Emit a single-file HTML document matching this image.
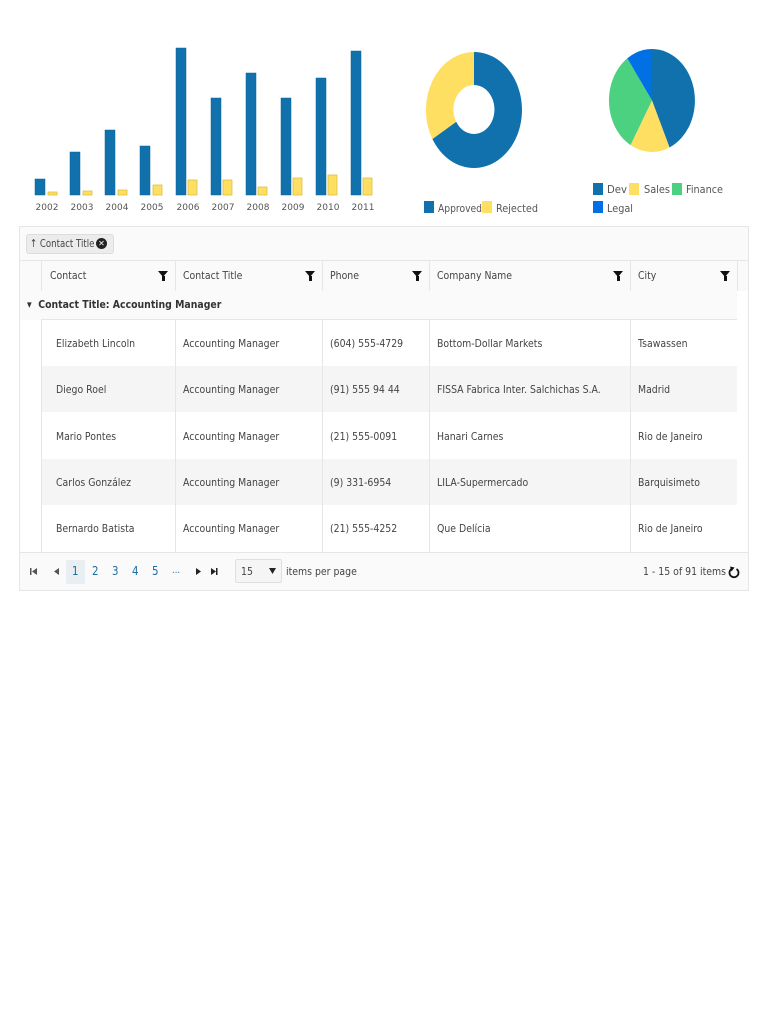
<!DOCTYPE html>
<html><head><meta charset="utf-8"><style>
*{box-sizing:border-box;margin:0;padding:0}
body{width:768px;height:1024px;background:#fff;font-family:"DejaVu Sans","Liberation Sans",sans-serif;color:#444;position:relative;overflow:hidden}
.a{position:absolute}
.grid{left:19px;top:226px;width:730px;height:365px;border:1px solid #e6e6e6;background:#fafafa}
.cell{position:absolute;font-size:11px;color:#444;white-space:nowrap;transform:scaleX(0.85);transform-origin:0 0}
.vl{position:absolute;width:1px;background:#e6e6e6}
.hl{position:absolute;height:1px;background:#e6e6e6}
.fil{position:absolute;width:0;height:0;border-left:5px solid transparent;border-right:5px solid transparent;border-top:6px solid #111}
.fil:after{content:"";position:absolute;left:-1.5px;top:-1px;width:3px;height:5px;background:#111}
</style></head><body>
<svg class="a" style="left:0;top:0" width="768" height="225">
<g fill="#1071ad" stroke="#0d6298" stroke-width="0.5">
<rect x="35" y="179" width="10" height="16"/><rect x="70" y="152" width="10" height="43"/><rect x="105" y="130" width="10" height="65"/><rect x="140" y="146" width="10" height="49"/><rect x="176" y="48" width="10" height="147"/><rect x="211" y="98" width="10" height="97"/><rect x="246" y="73" width="10" height="122"/><rect x="281" y="98" width="10" height="97"/><rect x="316" y="78" width="10" height="117"/><rect x="351" y="51" width="10" height="144"/>
</g>
<g fill="#ffdf62" stroke="#d6b83a" stroke-width="0.7">
<rect x="48" y="192" width="9" height="3"/><rect x="83" y="191" width="9" height="4"/><rect x="118" y="190" width="9" height="5"/><rect x="153" y="185" width="9" height="10"/><rect x="188" y="180" width="9" height="15"/><rect x="223" y="180" width="9" height="15"/><rect x="258" y="187" width="9" height="8"/><rect x="293" y="178" width="9" height="17"/><rect x="328" y="175" width="9" height="20"/><rect x="363" y="178" width="9" height="17"/>
</g>
<g font-size="9" fill="#555" text-anchor="middle" font-family="DejaVu Sans,sans-serif">
<text x="47" y="210">2002</text><text x="82" y="210">2003</text><text x="117" y="210">2004</text><text x="152" y="210">2005</text><text x="188" y="210">2006</text><text x="223" y="210">2007</text><text x="258" y="210">2008</text><text x="293" y="210">2009</text><text x="328" y="210">2010</text><text x="363" y="210">2011</text>
</g>
<path d="M474,52 A48,58 0 1 1 432.4,139 L456.2,121.75 A20.5,24.5 0 1 0 474,85 Z" fill="#1071ad"/>
<path d="M432.4,139 A48,58 0 0 1 474,52 L474,85 A20.5,24.5 0 0 0 456.2,121.75 Z" fill="#ffdf62"/>
<path d="M652,100.5 L652,49 A43,51.5 0 0 1 669.5,147.5 Z" fill="#1071ad"/>
<path d="M652,100.5 L669.5,147.5 A43,51.5 0 0 1 630.5,145.1 Z" fill="#ffdf62"/>
<path d="M652,100.5 L630.5,145.1 A43,51.5 0 0 1 627.3,58.3 Z" fill="#4cd180"/>
<path d="M652,100.5 L627.3,58.3 A43,51.5 0 0 1 652,49 Z" fill="#0070e4"/>
<g font-size="11" fill="#555" font-family="DejaVu Sans,sans-serif">
<rect x="424" y="201" width="10" height="12" fill="#1071ad"/><text x="438" y="212" textLength="44" lengthAdjust="spacingAndGlyphs">Approved</text>
<rect x="482" y="201" width="10" height="12" fill="#ffdf62"/><text x="496" y="212" textLength="42" lengthAdjust="spacingAndGlyphs">Rejected</text>
<rect x="593" y="183" width="10" height="12" fill="#1071ad"/><text x="607" y="193" textLength="20" lengthAdjust="spacingAndGlyphs">Dev</text>
<rect x="629" y="183" width="10" height="12" fill="#ffdf62"/><text x="644" y="193" textLength="26" lengthAdjust="spacingAndGlyphs">Sales</text>
<rect x="672" y="183" width="10" height="12" fill="#4cd180"/><text x="686" y="193" textLength="37" lengthAdjust="spacingAndGlyphs">Finance</text>
<rect x="593" y="201" width="10" height="12" fill="#0070e4"/><text x="607" y="212" textLength="26" lengthAdjust="spacingAndGlyphs">Legal</text>
</g>
</svg>

<div class="a grid">
 <div class="a" style="left:6px;top:7px;width:88px;height:20px;background:#ececec;border:1px solid #ddd;border-radius:3px"></div>
 <div class="cell" style="left:10px;top:10px;transform:scaleX(0.78)">↑ Contact Title</div>
 <div class="a" style="left:76px;top:11px;width:11px;height:11px;border-radius:50%;background:#222;color:#fff;font-size:8px;line-height:11px;text-align:center">✕</div>
 <div class="hl" style="left:0;top:33px;width:728px"></div>
 <div class="a" style="left:0;top:64px;width:728px;height:261px;background:#fff"></div>
 <div class="a" style="left:0;top:64px;width:717px;height:29px;background:#fafafa"></div>
 <div class="a" style="left:21px;top:139px;width:696px;height:46px;background:#f5f5f5"></div>
 <div class="a" style="left:21px;top:232px;width:696px;height:46px;background:#f5f5f5"></div>
 <div class="vl" style="left:21px;top:34px;height:30px"></div>
 <div class="vl" style="left:155px;top:34px;height:30px"></div>
 <div class="vl" style="left:302px;top:34px;height:30px"></div>
 <div class="vl" style="left:409px;top:34px;height:30px"></div>
 <div class="vl" style="left:610px;top:34px;height:30px"></div>
 <div class="vl" style="left:717px;top:34px;height:30px"></div>
 <div class="vl" style="left:21px;top:93px;height:232px"></div>
 <div class="vl" style="left:155px;top:93px;height:232px"></div>
 <div class="vl" style="left:302px;top:93px;height:232px"></div>
 <div class="vl" style="left:409px;top:93px;height:232px"></div>
 <div class="vl" style="left:610px;top:93px;height:232px"></div>
 <div class="hl" style="left:21px;top:92px;width:696px"></div>
 <div class="hl" style="left:0;top:325px;width:728px"></div>
 <div class="cell" style="left:30px;top:42px">Contact</div><div class="fil" style="left:138px;top:44px"></div>
 <div class="cell" style="left:163px;top:42px">Contact Title</div><div class="fil" style="left:285px;top:44px"></div>
 <div class="cell" style="left:310px;top:42px">Phone</div><div class="fil" style="left:392px;top:44px"></div>
 <div class="cell" style="left:417px;top:42px">Company Name</div><div class="fil" style="left:593px;top:44px"></div>
 <div class="cell" style="left:618px;top:42px">City</div><div class="fil" style="left:700px;top:44px"></div>
 <div class="cell" style="left:7px;top:71px;font-weight:bold;color:#333">▾ &nbsp;Contact Title: Accounting Manager</div>
 <div class="cell" style="left:36px;top:110px">Elizabeth Lincoln</div><div class="cell" style="left:163px;top:110px">Accounting Manager</div><div class="cell" style="left:310px;top:110px">(604) 555-4729</div><div class="cell" style="left:417px;top:110px">Bottom-Dollar Markets</div><div class="cell" style="left:618px;top:110px">Tsawassen</div>
 <div class="cell" style="left:36px;top:156px">Diego Roel</div><div class="cell" style="left:163px;top:156px">Accounting Manager</div><div class="cell" style="left:310px;top:156px">(91) 555 94 44</div><div class="cell" style="left:417px;top:156px">FISSA Fabrica Inter. Salchichas S.A.</div><div class="cell" style="left:618px;top:156px">Madrid</div>
 <div class="cell" style="left:36px;top:203px">Mario Pontes</div><div class="cell" style="left:163px;top:203px">Accounting Manager</div><div class="cell" style="left:310px;top:203px">(21) 555-0091</div><div class="cell" style="left:417px;top:203px">Hanari Carnes</div><div class="cell" style="left:618px;top:203px">Rio de Janeiro</div>
 <div class="cell" style="left:36px;top:249px">Carlos González</div><div class="cell" style="left:163px;top:249px">Accounting Manager</div><div class="cell" style="left:310px;top:249px">(9) 331-6954</div><div class="cell" style="left:417px;top:249px">LILA-Supermercado</div><div class="cell" style="left:618px;top:249px">Barquisimeto</div>
 <div class="cell" style="left:36px;top:295px">Bernardo Batista</div><div class="cell" style="left:163px;top:295px">Accounting Manager</div><div class="cell" style="left:310px;top:295px">(21) 555-4252</div><div class="cell" style="left:417px;top:295px">Que Delícia</div><div class="cell" style="left:618px;top:295px">Rio de Janeiro</div>
 <svg class="a" style="left:10px;top:340px" width="200" height="10">
  <g fill="#555"><rect x="0" y="1" width="1.5" height="7"/><path d="M7,1 L2,4.5 L7,8Z"/><path d="M29,1 L24,4.5 L29,8Z"/></g>
  <g fill="#222"><path d="M166,1 L171,4.5 L166,8Z"/><path d="M181,1 L186,4.5 L181,8Z"/><rect x="186" y="1" width="1.5" height="7"/></g>
 </svg>
 <div class="a" style="left:46px;top:333px;width:19px;height:24px;background:#e8eef2;border-radius:2px"></div>
 <div class="cell" style="left:52px;top:337px;font-size:12px;color:#1a6d9f">1</div>
 <div class="cell" style="left:72px;top:337px;font-size:12px;color:#1a6d9f">2</div>
 <div class="cell" style="left:92px;top:337px;font-size:12px;color:#1a6d9f">3</div>
 <div class="cell" style="left:112px;top:337px;font-size:12px;color:#1a6d9f">4</div>
 <div class="cell" style="left:132px;top:337px;font-size:12px;color:#1a6d9f">5</div>
 <div class="cell" style="left:152px;top:338px;font-size:10px;color:#1a6d9f">...</div>
 <div class="a" style="left:215px;top:332px;width:47px;height:24px;border:1px solid #e0e0e0;border-radius:2px;background:#f5f5f5"></div>
 <div class="cell" style="left:221px;top:338px">15</div>
 <svg class="a" style="left:249px;top:341px" width="8" height="6"><path d="M0,0 L7,0 L3.5,6Z" fill="#222"/></svg>
 <div class="cell" style="left:266px;top:338px">items per page</div>
 <div class="cell" style="left:623px;top:338px">1 - 15 of 91 items</div>
 <svg class="a" style="left:708px;top:338px" width="12" height="14"><path d="M8.5,4 A4.5,4.5 0 1 1 3.5,4" fill="none" stroke="#111" stroke-width="1.8"/><path d="M2,1.5 L6.5,2.5 L3.5,6.5Z" fill="#111"/></svg>
</div>
</body></html>
